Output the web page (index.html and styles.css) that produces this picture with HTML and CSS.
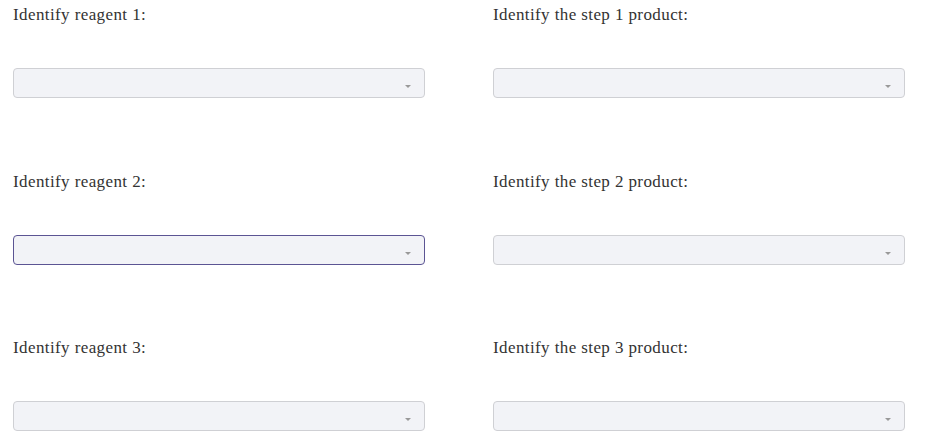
FILE: index.html
```html
<!DOCTYPE html>
<html>
<head>
<meta charset="utf-8">
<link rel="stylesheet" href="styles.css">
</head>
<body>
<div class="form">
  <div class="field">
    <div class="label">Identify reagent 1:</div>
    <div class="select"><span class="arrow"></span></div>
  </div>
  <div class="field">
    <div class="label">Identify the step 1 product:</div>
    <div class="select"><span class="arrow"></span></div>
  </div>
  <div class="field">
    <div class="label">Identify reagent 2:</div>
    <div class="select focused"><span class="arrow"></span></div>
  </div>
  <div class="field">
    <div class="label">Identify the step 2 product:</div>
    <div class="select"><span class="arrow"></span></div>
  </div>
  <div class="field">
    <div class="label">Identify reagent 3:</div>
    <div class="select"><span class="arrow"></span></div>
  </div>
  <div class="field">
    <div class="label">Identify the step 3 product:</div>
    <div class="select"><span class="arrow"></span></div>
  </div>
</div>
</body>
</html>
```
FILE: styles.css
```css
html, body {
  margin: 0;
  padding: 0;
  background: #ffffff;
}
body {
  font-family: "Liberation Serif", "Times New Roman", serif;
  font-size: 17px;
  color: #333333;
}
.form {
  display: grid;
  grid-template-columns: 412px 412px;
  column-gap: 68px;
  row-gap: 73.5px;
  padding: 5px 0 0 13px;
}
.field {
  display: flex;
  flex-direction: column;
}
.label {
  line-height: 20px;
  height: 20px;
  margin-bottom: 43px;
  letter-spacing: 0.4px;
  white-space: nowrap;
}
.select {
  position: relative;
  box-sizing: border-box;
  height: 30px;
  background: #f2f3f7;
  border: 1px solid #cfd0d4;
  border-radius: 4px;
}
.select.focused {
  border: 1.5px solid #5b5493;
}
.arrow {
  position: absolute;
  right: 13px;
  top: 16px;
  width: 0;
  height: 0;
  border-left: 3px solid transparent;
  border-right: 3px solid transparent;
  border-top: 3px solid #999999;
}
```
